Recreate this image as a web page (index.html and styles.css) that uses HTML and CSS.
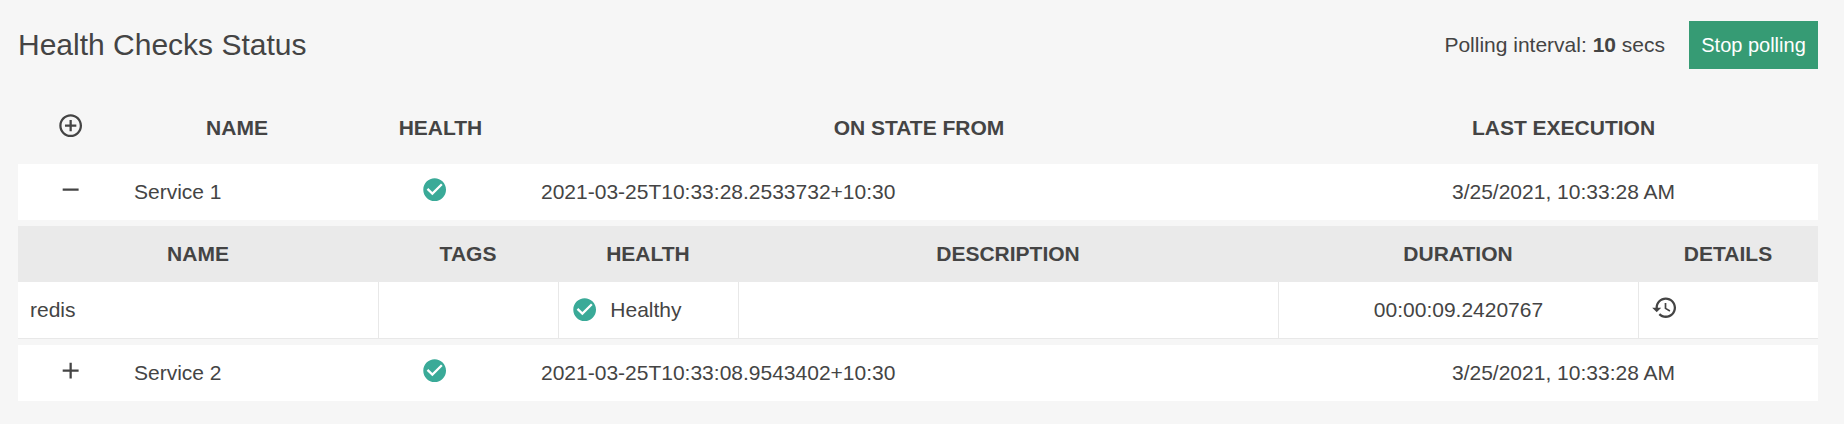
FILE: index.html
```html
<!DOCTYPE html>
<html lang="en">
<head>
<meta charset="utf-8">
<title>Health Checks Status</title>
<link rel="stylesheet" href="styles.css">
</head>
<body>
<svg class="symbols" aria-hidden="true">
  <symbol id="check-circle" viewBox="0 0 24 24"><path d="M12 2C6.48 2 2 6.48 2 12s4.48 10 10 10 10-4.48 10-10S17.52 2 12 2zm-2 15l-5-5 1.41-1.41L10 14.17l7.59-7.59L19 8l-9 9z"/></symbol>
  <symbol id="add-circle" viewBox="0 0 24 24"><path d="M13 7h-2v4H7v2h4v4h2v-4h4v-2h-4V7zm-1-5C6.48 2 2 6.48 2 12s4.48 10 10 10 10-4.48 10-10S17.52 2 12 2zm0 18c-4.410 0-8-3.590-8-8s3.590-8 8-8 8 3.590 8 8-3.590 8-8 8z"/></symbol>
  <symbol id="add" viewBox="0 0 24 24"><path d="M19 13h-6v6h-2v-6H5v-2h6V5h2v6h6v2z"/></symbol>
  <symbol id="remove" viewBox="0 0 24 24"><path d="M19 13H5v-2h14v2z"/></symbol>
  <symbol id="history" viewBox="0 0 24 24"><path d="M13 3c-4.970 0-9 4.030-9 9H1l3.890 3.890.07.14L9 12H6c0-3.870 3.130-7 7-7s7 3.130 7 7-3.130 7-7 7c-1.930 0-3.680-.79-4.940-2.060l-1.420 1.420C8.270 19.990 10.510 21 13 21c4.970 0 9-4.030 9-9s-4.030-9-9-9zm-1 5v5l4.280 2.540.72-1.210-3.500-2.080V8H12z"/></symbol>
</svg>
<main class="page">
  <header class="topbar">
    <h1 class="title">Health Checks Status</h1>
    <div class="polling">
      <span>Polling interval: <b>10</b> secs</span>
      <button class="button" type="button">Stop polling</button>
    </div>
  </header>

  <section class="services">
    <div class="row row-head">
      <div class="toggle"><svg class="icon"><use href="#add-circle"/></svg></div>
      <div>Name</div>
      <div>Health</div>
      <div>On state from</div>
      <div>Last execution</div>
    </div>

    <div class="row">
      <div class="toggle"><svg class="icon"><use href="#remove"/></svg></div>
      <div>Service 1</div>
      <div class="status"><svg class="icon healthy"><use href="#check-circle"/></svg></div>
      <div>2021-03-25T10:33:28.2533732+10:30</div>
      <div class="center">3/25/2021, 10:33:28 AM</div>
    </div>

    <div class="checks">
      <div class="check-row check-head">
        <div>Name</div>
        <div>Tags</div>
        <div>Health</div>
        <div>Description</div>
        <div>Duration</div>
        <div>Details</div>
      </div>
      <div class="check-row check-item">
        <div>redis</div>
        <div></div>
        <div class="state"><svg class="icon healthy"><use href="#check-circle"/></svg><span>Healthy</span></div>
        <div></div>
        <div class="center">00:00:09.2420767</div>
        <div class="details"><svg class="icon"><use href="#history"/></svg></div>
      </div>
    </div>

    <div class="row">
      <div class="toggle"><svg class="icon"><use href="#add"/></svg></div>
      <div>Service 2</div>
      <div class="status"><svg class="icon healthy"><use href="#check-circle"/></svg></div>
      <div>2021-03-25T10:33:08.9543402+10:30</div>
      <div class="center">3/25/2021, 10:33:28 AM</div>
    </div>
  </section>
</main>
</body>
</html>
```
FILE: styles.css
```css
* { box-sizing: border-box; }

body {
  margin: 0;
  background: #f6f6f6;
  color: #444;
  font: 21px/24px "Liberation Sans", Arial, sans-serif;
}

.symbols { display: none; }

.page { padding: 21px 26px 0 18px; }

.topbar {
  display: flex;
  justify-content: space-between;
  align-items: center;
  height: 48px;
}

.title {
  margin: 0;
  font-size: 30px;
  line-height: 34px;
  font-weight: 400;
}

.polling {
  display: flex;
  align-items: center;
  gap: 24px;
}

.button {
  width: 129px;
  height: 48px;
  padding: 12px 0;
  border: 0;
  background: #369b74;
  color: #fff;
  font: inherit;
  font-size: 20px;
}

.services {
  display: flex;
  flex-direction: column;
  gap: 6px;
  margin-top: 31px;
}

.row {
  display: grid;
  grid-template-columns: 104px 230px 177px 780px 509px;
  height: 56px;
  background: #fff;
}

.row > div,
.check-row > div { padding: 16px 12px; }

.row-head {
  height: 58px;
  background: none;
}

.row-head,
.check-head {
  font-weight: 700;
  text-align: center;
  text-transform: uppercase;
}

.center { text-align: center; }

.icon {
  display: block;
  flex: none;
  width: 27.3px;
  height: 27.3px;
  fill: currentColor;
}

.healthy { color: #3aaa98; }

.row > .toggle,
.row > .status,
.check-row > .details {
  display: flex;
  justify-content: center;
  padding-top: 11.7px;
}

.row > .toggle { padding-left: 13px; }

.row > .status { padding-right: 23.5px; }

.check-row > .details {
  justify-content: flex-start;
  padding-left: 11.5px;
}

.check-row > .state {
  display: flex;
  align-items: flex-start;
  gap: 12px;
  padding-top: 13.700px;
  padding-bottom: 0;
}

.state span { margin-top: 2.300px; }

.check-row {
  display: grid;
  grid-template-columns: 2fr 1fr 1fr 3fr 2fr 1fr;
  height: 56px;
}

.check-head { background: #eaeaea; }

.check-item {
  height: 57px;
  background: #fff;
  border-bottom: 1px solid #e8e8e8;
}

.check-item > div + div { border-left: 1px solid #e8e8e8; }
```
